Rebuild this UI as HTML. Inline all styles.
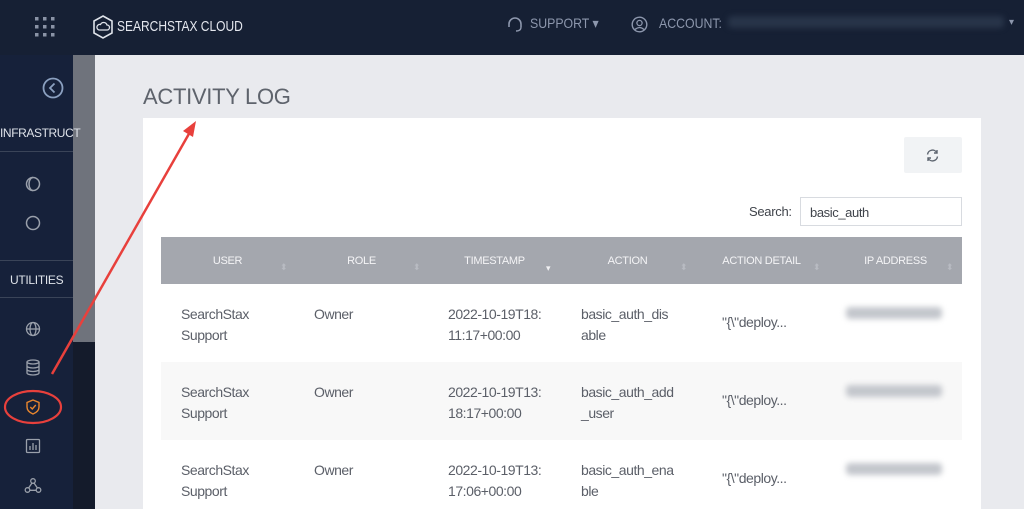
<!DOCTYPE html>
<html><head><meta charset="utf-8"><style>
*{margin:0;padding:0;box-sizing:border-box}
html,body{width:1024px;height:509px;overflow:hidden}
body{background:#e9eaee;font-family:"Liberation Sans",sans-serif;position:relative}
.top{position:absolute;left:0;top:0;width:1024px;height:55px;background:#162034}
.side{position:absolute;left:0;top:55px;width:73px;height:454px;background:#16213a}
.strip{position:absolute;left:73px;top:55px;width:22px;height:287px;background:#6f737c}
.strip2{position:absolute;left:73px;top:342px;width:22px;height:167px;background:#141b2b}
.t{position:absolute;white-space:nowrap}
.panel{position:absolute;left:143px;top:118px;width:838px;height:391px;background:#fff}
.hdr{position:absolute;left:161px;top:237px;width:801px;height:47px;background:#a4a7ae}
.hc{position:absolute;top:18px;color:#f4f4f6;font-size:11px;text-align:center;width:133px;letter-spacing:-0.3px}
.row{position:absolute;left:161px;width:801px;height:78px}
.c{position:absolute;color:#5b5f68;font-size:14px;line-height:20.5px;letter-spacing:-0.45px;white-space:nowrap}
.blur{position:absolute;height:12px;background:#c3c6cc;filter:blur(3px);border-radius:4px}
.arr{position:absolute;font-size:9px;color:#b8bbc2}
</style></head><body>
<div class="top"></div>
<svg class="t" style="left:34px;top:16px" width="22" height="22"><g fill="#8a93a6"><rect x="1" y="1" width="3.5" height="3.5"/><rect x="9" y="1" width="3.5" height="3.5"/><rect x="17" y="1" width="3.5" height="3.5"/><rect x="1" y="9" width="3.5" height="3.5"/><rect x="9" y="9" width="3.5" height="3.5"/><rect x="17" y="9" width="3.5" height="3.5"/><rect x="1" y="17" width="3.5" height="3.5"/><rect x="9" y="17" width="3.5" height="3.5"/><rect x="17" y="17" width="3.5" height="3.5"/></g></svg>
<svg class="t" style="left:92px;top:15px" width="22" height="24"><polygon points="11,1 20,6 20,18 11,23 2,18 2,6" fill="none" stroke="#dfe3ea" stroke-width="1.6"/><path d="M7 15 h8 a2.5 2.5 0 0 0 0-5 a3.5 3.5 0 0 0-6.5-.5 a2.5 2.5 0 0 0-1.5 5.5z" fill="none" stroke="#dfe3ea" stroke-width="1.3"/></svg>
<div class="t" style="left:117px;top:18px;color:#e4e7ee;font-size:15px;transform:scaleX(0.8);transform-origin:0 0">SEARCHSTAX CLOUD</div>
<svg class="t" style="left:507px;top:16px" width="16" height="18"><path d="M2 11 V8 a6 6 0 0 1 12 0 V11" fill="none" stroke="#8d97ad" stroke-width="1.6"/><path d="M14 11 q0 4 -5 4" fill="none" stroke="#8d97ad" stroke-width="1.4"/></svg>
<div class="t" style="left:530px;top:15px;color:#8d97ad;font-size:14px;transform:scaleX(0.88);transform-origin:0 0">SUPPORT ▾</div>
<svg class="t" style="left:631px;top:16px" width="17" height="17"><circle cx="8.5" cy="8.5" r="7.3" fill="none" stroke="#8d97ad" stroke-width="1.4"/><circle cx="8.5" cy="7" r="2.6" fill="none" stroke="#8d97ad" stroke-width="1.3"/><path d="M4 13.5 q4.5-4 9 0" fill="none" stroke="#8d97ad" stroke-width="1.3"/></svg>
<div class="t" style="left:659px;top:15px;color:#8d97ad;font-size:14px;transform:scaleX(0.88);transform-origin:0 0">ACCOUNT:</div>
<div class="blur" style="left:728px;top:16px;width:276px;height:12px;background:#283449"></div>
<div class="t" style="left:1009px;top:17px;color:#8d97ad;font-size:10px">▾</div>

<div class="side"></div><div class="strip"></div><div class="strip2"></div>
<svg class="t" style="left:42px;top:77px" width="22" height="22"><circle cx="11" cy="11" r="9.5" fill="none" stroke="#8ba0c0" stroke-width="1.8"/><path d="M12.5 6.5 L8 11 L12.5 15.5" fill="none" stroke="#8ba0c0" stroke-width="1.8"/></svg>
<div class="t" style="left:0;top:126px;color:#dfe3ea;font-size:12px;letter-spacing:-0.4px">INFRASTRUCT</div>
<div style="position:absolute;left:0;top:151px;width:73px;height:1px;background:#3a4458"></div>
<svg class="t" style="left:25px;top:176px" width="16" height="16"><circle cx="8" cy="8" r="6.5" fill="none" stroke="#9aa0ab" stroke-width="1.5"/><path d="M8 1.5 a4 6.5 0 0 0 0 13" fill="none" stroke="#9aa0ab" stroke-width="1.5"/></svg>
<svg class="t" style="left:25px;top:215px" width="16" height="16"><circle cx="8" cy="8" r="6.5" fill="none" stroke="#9aa0ab" stroke-width="1.5"/></svg>
<div style="position:absolute;left:0;top:260px;width:73px;height:1px;background:#3a4458"></div>
<div class="t" style="left:10px;top:273px;color:#dfe3ea;font-size:12px;letter-spacing:-0.3px">UTILITIES</div>
<div style="position:absolute;left:0;top:297px;width:73px;height:1px;background:#3a4458"></div>
<svg class="t" style="left:25px;top:321px" width="16" height="16" fill="none" stroke="#9aa0ab" stroke-width="1.3"><circle cx="8" cy="8" r="6.5"/><ellipse cx="8" cy="8" rx="3" ry="6.5"/><path d="M1.5 8h13"/></svg>
<svg class="t" style="left:25px;top:359px" width="16" height="17" fill="none" stroke="#9aa0ab" stroke-width="1.3"><ellipse cx="8" cy="3" rx="6" ry="2"/><path d="M2 3v11a6 2 0 0 0 12 0V3M2 7a6 2 0 0 0 12 0M2 10.5a6 2 0 0 0 12 0"/></svg>
<svg class="t" style="left:26px;top:399px" width="14" height="16" fill="none" stroke="#e8862e" stroke-width="1.4"><path d="M7 1 L13 3.5 V8 Q13 12.5 7 15 Q1 12.5 1 8 V3.5 Z"/><path d="M4.3 8 L6.3 10 L9.8 6"/></svg>
<svg class="t" style="left:25px;top:438px" width="16" height="16" fill="none" stroke="#9aa0ab" stroke-width="1.3"><rect x="1.5" y="1.5" width="13" height="13" rx="1"/><path d="M5 12V8M8 12V5M11 12V7"/></svg>
<svg class="t" style="left:24px;top:477px" width="18" height="17" fill="none" stroke="#9aa0ab" stroke-width="1.3"><circle cx="9" cy="4" r="2.3"/><circle cx="3.5" cy="13" r="2.3"/><circle cx="14.5" cy="13" r="2.3"/><path d="M8 6L4.6 11M10 6L13.4 11M5.8 13.3H12.2"/></svg>

<div class="t" style="left:143px;top:84px;color:#5e636c;font-size:22px;letter-spacing:-0.3px">ACTIVITY LOG</div>
<div class="panel"></div>
<div style="position:absolute;left:904px;top:137px;width:58px;height:36px;background:#f1f3f5;border-radius:2px"></div>
<svg class="t" style="left:925px;top:148px" width="15" height="15" fill="none" stroke="#5e6570" stroke-width="1.4"><path d="M2.5 6.5 A5 5 0 0 1 12 5"/><path d="M12.5 8.5 A5 5 0 0 1 3 10"/><path d="M12 2v3h-3M3 13v-3h3"/></svg>
<div class="t" style="left:749px;top:204px;color:#40444b;font-size:13px;letter-spacing:-0.3px">Search:</div>
<div style="position:absolute;left:800px;top:197px;width:162px;height:29px;border:1px solid #d8dbe0;background:#fff"></div>
<div class="t" style="left:810px;top:205px;color:#40444b;font-size:13px;letter-spacing:-0.4px">basic_auth</div>

<div class="hdr">
<div class="hc" style="left:0">USER</div><div class="arr" style="left:119px;top:25px">⬍</div>
<div class="hc" style="left:134px">ROLE</div><div class="arr" style="left:252px;top:25px">⬍</div>
<div class="hc" style="left:267px">TIMESTAMP</div><div class="arr" style="left:385px;top:26px;color:#f0f0f2">▾</div>
<div class="hc" style="left:400px">ACTION</div><div class="arr" style="left:519px;top:25px">⬍</div>
<div class="hc" style="left:534px">ACTION DETAIL</div><div class="arr" style="left:652px;top:25px">⬍</div>
<div class="hc" style="left:668px">IP ADDRESS</div><div class="arr" style="left:785px;top:25px">⬍</div>
</div>

<div class="row" style="top:284px"></div>
<div class="row" style="top:362px;background:#f8f8f8"></div>
<div class="row" style="top:440px"></div>

<div class="c" style="left:181px;top:304px">SearchStax<br>Support</div>
<div class="c" style="left:314px;top:304px">Owner</div>
<div class="c" style="left:448px;top:304px">2022-10-19T18:<br>11:17+00:00</div>
<div class="c" style="left:581px;top:304px">basic_auth_dis<br>able</div>
<div class="c" style="left:722px;top:312px">"{\"deploy...</div>
<div class="blur" style="left:846px;top:307px;width:96px"></div>

<div class="c" style="left:181px;top:382px">SearchStax<br>Support</div>
<div class="c" style="left:314px;top:382px">Owner</div>
<div class="c" style="left:448px;top:382px">2022-10-19T13:<br>18:17+00:00</div>
<div class="c" style="left:581px;top:382px">basic_auth_add<br>_user</div>
<div class="c" style="left:722px;top:390px">"{\"deploy...</div>
<div class="blur" style="left:846px;top:385px;width:96px"></div>

<div class="c" style="left:181px;top:460px">SearchStax<br>Support</div>
<div class="c" style="left:314px;top:460px">Owner</div>
<div class="c" style="left:448px;top:460px">2022-10-19T13:<br>17:06+00:00</div>
<div class="c" style="left:581px;top:460px">basic_auth_ena<br>ble</div>
<div class="c" style="left:722px;top:468px">"{\"deploy...</div>
<div class="blur" style="left:846px;top:463px;width:96px"></div>

<svg style="position:absolute;left:0;top:0" width="1024" height="509">
<line x1="52" y1="374" x2="190" y2="132" stroke="#e8403c" stroke-width="2.5"/>
<polygon points="196,121 183,131 193,137" fill="#e8403c"/>
<ellipse cx="33" cy="407" rx="28" ry="16" fill="none" stroke="#e8403c" stroke-width="2.2"/>
</svg>
</body></html>
